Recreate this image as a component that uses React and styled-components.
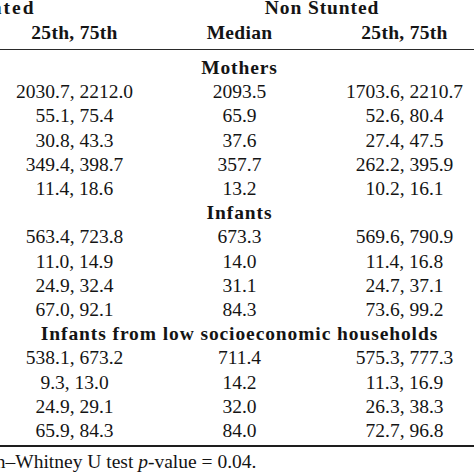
import React from 'react';
import styled, { createGlobalStyle } from 'styled-components';

const GlobalStyle = createGlobalStyle`
  html, body {
    margin: 0;
    padding: 0;
    background: #ffffff;
  }
  body {
    width: 474px;
    height: 474px;
    overflow: hidden;
  }
`;

const Wrapper = styled.div`
  width: 474px;
  height: 474px;
  overflow: hidden;
  background: #ffffff;
  color: #141414;
  font-family: "Liberation Serif", "Times New Roman", serif;
  font-size: 19.5px;
`;

/* label column + 5 value columns; the visible part starts halfway through Stunted */
const Table = styled.table`
  border-collapse: collapse;
  table-layout: fixed;
  width: 1005px;
  margin-left: -353px;
  margin-top: -4px;
`;

const Col = styled.col`
  width: ${(p) => p.$w}px;
`;

const GroupCell = styled.th`
  font-weight: bold;
  text-align: center;
  line-height: 24px;
  letter-spacing: ${(p) => p.$spacing ?? 0.9}px;
  padding: 0 0 0 ${(p) => p.$shift ?? 0}px;
  white-space: nowrap;
`;

const HeadCell = styled.th`
  font-weight: bold;
  text-align: center;
  line-height: 26px;
  letter-spacing: 0.3px;
  padding: 0 0 3px;
  border-bottom: 1px solid #2a2a2a;
  white-space: nowrap;
`;

const SectionCell = styled.td`
  font-weight: bold;
  text-align: center;
  line-height: 24.2px;
  letter-spacing: 0.9px;
  padding: ${(p) => (p.$first ? 6 : 0)}px 0 0;
  white-space: nowrap;
`;

const Cell = styled.td`
  text-align: center;
  line-height: 24.2px;
  padding: 0 0 ${(p) => (p.$last ? 2 : 0)}px;
  border-bottom: ${(p) => (p.$last ? '2px solid #1e1e1e' : 'none')};
  white-space: nowrap;
`;

const Footnote = styled.p`
  margin: 3px 0 0 -40px;
  line-height: 24px;
  white-space: nowrap;
`;

const sections = [
  {
    title: 'Mothers',
    rows: [
      ['2030.7, 2212.0', '2093.5', '1703.6, 2210.7'],
      ['55.1, 75.4', '65.9', '52.6, 80.4'],
      ['30.8, 43.3', '37.6', '27.4, 47.5'],
      ['349.4, 398.7', '357.7', '262.2, 395.9'],
      ['11.4, 18.6', '13.2', '10.2, 16.1'],
    ],
  },
  {
    title: 'Infants',
    rows: [
      ['563.4, 723.8', '673.3', '569.6, 790.9'],
      ['11.0, 14.9', '14.0', '11.4, 16.8'],
      ['24.9, 32.4', '31.1', '24.7, 37.1'],
      ['67.0, 92.1', '84.3', '73.6, 99.2'],
    ],
  },
  {
    title: 'Infants from low socioeconomic households',
    rows: [
      ['538.1, 673.2', '711.4', '575.3, 777.3'],
      ['9.3, 13.0', '14.2', '11.3, 16.9'],
      ['24.9, 29.1', '32.0', '26.3, 38.3'],
      ['65.9, 84.3', '84.0', '72.7, 96.8'],
    ],
  },
];

const App = () => {
  const lastSection = sections.length - 1;

  return (
    <>
      <GlobalStyle />
      <Wrapper>
        <Table>
          <colgroup>
            <Col $w={180} />
            <Col $w={165} />
            <Col $w={165} />
            <Col $w={165} />
            <Col $w={165} />
            <Col $w={165} />
          </colgroup>
          <thead>
            <tr>
              <GroupCell />
              <GroupCell colSpan={2} $spacing={2} $shift={8}>
                Stunted
              </GroupCell>
              <GroupCell colSpan={2}>Non Stunted</GroupCell>
              <GroupCell />
            </tr>
            <tr>
              <HeadCell />
              <HeadCell>Median</HeadCell>
              <HeadCell>25th, 75th</HeadCell>
              <HeadCell>Median</HeadCell>
              <HeadCell>25th, 75th</HeadCell>
              <HeadCell />
            </tr>
          </thead>
          <tbody>
            {sections.map((section, si) => (
              <React.Fragment key={section.title}>
                <tr>
                  <SectionCell $first={si === 0} />
                  <SectionCell $first={si === 0} colSpan={5}>
                    {section.title}
                  </SectionCell>
                </tr>
                {section.rows.map((row, ri) => {
                  const last = si === lastSection && ri === section.rows.length - 1;
                  return (
                    <tr key={ri}>
                      <Cell $last={last} />
                      <Cell $last={last} />
                      <Cell $last={last}>{row[0]}</Cell>
                      <Cell $last={last}>{row[1]}</Cell>
                      <Cell $last={last}>{row[2]}</Cell>
                      <Cell $last={last} />
                    </tr>
                  );
                })}
              </React.Fragment>
            ))}
          </tbody>
        </Table>
        <Footnote>
          Mann–Whitney U test <i>p</i>-value = 0.04.
        </Footnote>
      </Wrapper>
    </>
  );
};

export default App;
